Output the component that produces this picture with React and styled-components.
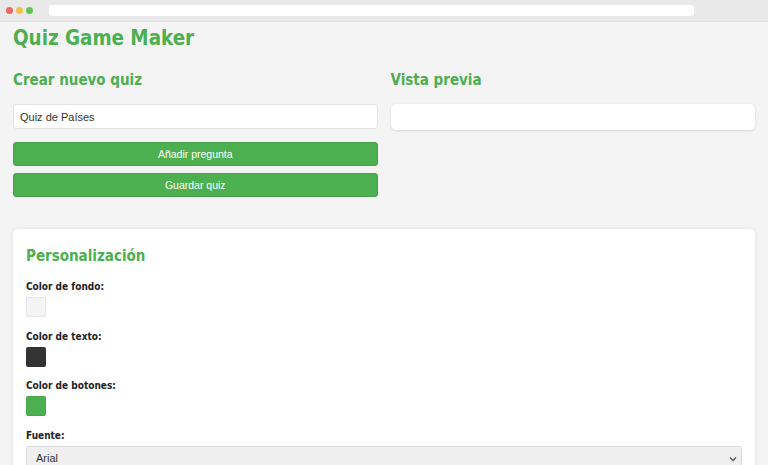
import React, { useState } from "react";
import styled, { createGlobalStyle } from "styled-components";

const GREEN = "#4caf50";

const GlobalStyle = createGlobalStyle`
  html, body {
    margin: 0;
    padding: 0;
    background: #f4f4f4;
  }
  body {
    font-family: "DejaVu Sans Condensed", "DejaVu Sans", Verdana, sans-serif;
    color: #333;
  }
  * { box-sizing: border-box; }
`;

const Chrome = styled.div`
  height: 22px;
  background: #e9e9e9;
  border-bottom: 1px solid #e2e2e2;
  display: flex;
  align-items: center;
  padding: 0 6px;
  gap: 3px;
`;

const Dot = styled.span`
  width: 7px;
  height: 7px;
  border-radius: 50%;
  background: ${p => p.color};
`;

const UrlBar = styled.div`
  margin-left: 13px;
  width: 645px;
  height: 11px;
  border-radius: 3px;
  background: #fff;
`;

const Page = styled.main`
  padding: 0 13px;
`;

const Title = styled.h1`
  margin: 4px 0 0;
  font-size: 20.4px;
  line-height: 24px;
  font-weight: bold;
  color: ${GREEN};
`;

const Columns = styled.div`
  display: grid;
  grid-template-columns: 1fr 1fr;
  gap: 13px;
  margin-top: 20px;
`;

const Column = styled.section`
  display: flex;
  flex-direction: column;
`;

const SectionTitle = styled.h2`
  margin: 0 0 14px;
  font-size: 15px;
  line-height: 20px;
  font-weight: bold;
  color: ${GREEN};
`;

const TextInput = styled.input`
  height: 25px;
  padding: 0 6px;
  border: 1px solid #e4e4e4;
  border-radius: 3px;
  background: #fff;
  font-family: "Liberation Sans", Arial, sans-serif;
  font-size: 11px;
  color: #333;
  outline: none;
  margin-bottom: 13px;
`;

const Button = styled.button`
  height: 24px;
  border: 1px solid #45a049;
  border-radius: 3px;
  background: ${GREEN};
  color: #fff;
  font-family: "Liberation Sans", Arial, sans-serif;
  font-size: 10.5px;
  cursor: pointer;
  margin-bottom: 7px;
`;

const Preview = styled.div`
  height: 26px;
  background: #fff;
  border-radius: 5px;
  box-shadow: 0 1px 3px rgba(0, 0, 0, 0.12);
`;

const Card = styled.section`
  margin-top: 25px;
  background: #fff;
  border-radius: 5px;
  box-shadow: 0 0 4px rgba(0, 0, 0, 0.1);
  padding: 17px 13px 20px;
`;

const Field = styled.div`
  display: flex;
  flex-direction: column;
  align-items: flex-start;
  margin-bottom: 12.5px;
`;

const Label = styled.label`
  font-size: 10px;
  line-height: 13px;
  font-weight: bold;
  color: #222;
  margin-bottom: 4px;
`;

const Swatch = styled.div`
  width: 20px;
  height: 20px;
  border-radius: 2px;
  background: ${p => p.color};
  border: 1px solid rgba(0, 0, 0, 0.05);
`;

const SelectWrap = styled.div`
  position: relative;
  align-self: stretch;
`;

const Select = styled.select`
  width: 100%;
  height: 25px;
  appearance: none;
  border: 1px solid #dcdcdc;
  border-radius: 3px;
  background: #efefef;
  padding: 0 9px;
  font-family: "Liberation Sans", Arial, sans-serif;
  font-size: 11px;
  color: #333;
`;

const Chevron = styled.svg`
  position: absolute;
  right: 5px;
  top: 10px;
  pointer-events: none;
`;

export default function App() {
  const [name, setName] = useState("Quiz de Países");
  const [font, setFont] = useState("Arial");

  return (
    <>
      <GlobalStyle />
      <Chrome>
        <Dot color="#ed6a5e" />
        <Dot color="#f5bf4f" />
        <Dot color="#61c554" />
        <UrlBar />
      </Chrome>
      <Page>
        <Title>Quiz Game Maker</Title>
        <Columns>
          <Column>
            <SectionTitle>Crear nuevo quiz</SectionTitle>
            <TextInput value={name} onChange={e => setName(e.target.value)} />
            <Button>Añadir pregunta</Button>
            <Button>Guardar quiz</Button>
          </Column>
          <Column>
            <SectionTitle>Vista previa</SectionTitle>
            <Preview />
          </Column>
        </Columns>
        <Card>
          <SectionTitle>Personalización</SectionTitle>
          <Field>
            <Label>Color de fondo:</Label>
            <Swatch color="#f4f4f4" />
          </Field>
          <Field>
            <Label>Color de texto:</Label>
            <Swatch color="#333333" />
          </Field>
          <Field>
            <Label>Color de botones:</Label>
            <Swatch color={GREEN} />
          </Field>
          <Field>
            <Label>Fuente:</Label>
            <SelectWrap>
              <Select value={font} onChange={e => setFont(e.target.value)}>
                <option>Arial</option>
                <option>Verdana</option>
                <option>Georgia</option>
              </Select>
              <Chevron width="8" height="6" viewBox="0 0 8 6">
                <path d="M1 1.5 L4 4.5 L7 1.5" fill="none" stroke="#555" strokeWidth="1.3" />
              </Chevron>
            </SelectWrap>
          </Field>
        </Card>
      </Page>
    </>
  );
}
